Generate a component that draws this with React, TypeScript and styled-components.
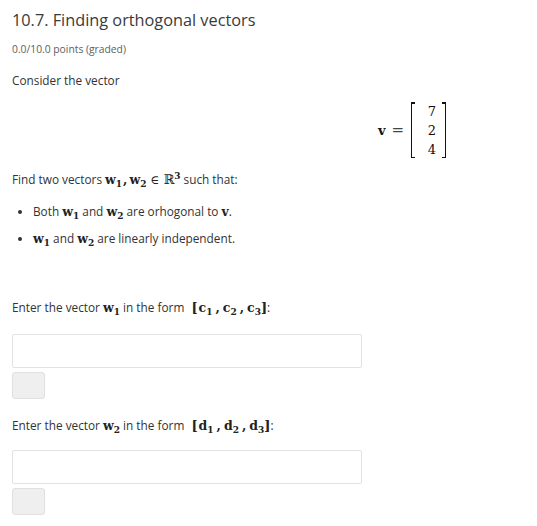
import React from "react";
import styled, { createGlobalStyle } from "styled-components";

const Global = createGlobalStyle`
  html, body { margin: 0; padding: 0; background: #fff; }
  body { font-family: "Open Sans", "Noto Sans", sans-serif; color: #333; }
`;

const Page = styled.div`
  padding: 8px 12px 0 12px;
  width: 350px;
`;

const Title = styled.h2`
  margin: 0;
  font-size: 16.3px;
  font-weight: 400;
  line-height: 24px;
  color: #3a3a3a;
  white-space: nowrap;
`;

const Points = styled.div`
  margin-top: 10px;
  font-size: 10.3px;
  line-height: 14px;
  color: #5e5e5e;
`;

const Para = styled.p<{ $mt?: number }>`
  margin: ${(p) => p.$mt ?? 0}px 0 0 0;
  font-size: 11.8px;
  line-height: 16px;
  color: #333;
  white-space: nowrap;
`;

const Display = styled.div`
  display: flex;
  align-items: center;
  margin-top: 14px;
  margin-left: 366px;
  height: 56px;
`;

const serif = `"DejaVu Serif", "Liberation Serif", serif`;

const Bold = styled.span`
  font-family: ${serif};
  font-weight: 700;
  font-size: 12.5px;
  color: #222;
`;

const Sub = styled.sub`
  font-family: ${serif};
  font-weight: 700;
  font-size: 9px;
  vertical-align: -2.5px;
  line-height: 0;
  color: #222;
`;

const Sup = styled.sup`
  font-family: ${serif};
  font-weight: 700;
  font-size: 9px;
  vertical-align: 5px;
  line-height: 0;
  color: #222;
`;

const Comma = styled.span<{ $wide?: boolean }>`
  font-family: ${serif};
  font-weight: 700;
  font-size: 12.5px;
  color: #222;
  margin: ${(p) => (p.$wide ? "0 3px 0 3px" : "0 2px 0 1px")};
`;

const MathOp = styled.span`
  font-family: ${serif};
  font-size: 12px;
  margin: 0 4px;
  color: #222;
`;

const Reals = styled.span`
  font-family: ${serif};
  font-size: 13px;
  color: #222;
`;

const VarV = styled.span`
  font-family: ${serif};
  font-weight: 700;
  font-size: 13px;
  color: #111;
`;

const Eq = styled.span`
  font-family: ${serif};
  font-size: 15px;
  margin: 0 7px 0 6px;
  color: #444;
`;

const BracketWrap = styled.div`
  position: relative;
`;

const Matrix = styled.div`
  display: flex;
  flex-direction: column;
  align-items: flex-end;
  justify-content: space-between;
  box-sizing: border-box;
  height: 56px;
  width: 35px;
  padding: 1px 9px 0 0;
  border-left: 1.5px solid #111;
  border-right: 1.5px solid #111;
`;

const Corner = styled.span<{ $side: "l" | "r"; $pos: "t" | "b" }>`
  position: absolute;
  ${(p) => (p.$side === "l" ? "left: 0;" : "right: 0;")}
  ${(p) => (p.$pos === "t" ? "top: 0;" : "bottom: 0;")}
  width: 4px;
  height: 1.5px;
  background: #111;
`;

const Cell = styled.span`
  font-family: ${serif};
  font-size: 13px;
  line-height: 17px;
  color: #111;
`;

const Bullets = styled.ul`
  margin: 15px 0 0 0;
  padding: 0 0 0 21px;
  font-size: 11.8px;
  line-height: 16px;
  color: #333;
`;

const Item = styled.li`
  margin-bottom: 10px;
  white-space: nowrap;
`;

const Bracket = styled.span<{ $open?: boolean }>`
  font-family: ${serif};
  font-weight: 700;
  font-size: 13px;
  color: #222;
  margin-left: ${(p) => (p.$open ? "4px" : "0")};
  margin-right: ${(p) => (p.$open ? "1px" : "0")};
`;

const Input = styled.div<{ $mt: number }>`
  margin-top: ${(p) => p.$mt}px;
  width: 350px;
  height: 34px;
  box-sizing: border-box;
  border: 1px solid #e2e2e2;
  border-radius: 2px;
  background: #fff;
`;

const Button = styled.div`
  margin-top: 4px;
  width: 33px;
  height: 27px;
  box-sizing: border-box;
  border: 1px solid #e0e0e0;
  border-radius: 3px;
  background: #efefef;
`;

const W = ({ n }: { n: string }) => (
  <>
    <Bold>w</Bold>
    <Sub>{n}</Sub>
  </>
);

const Form = ({ l }: { l: string }) => (
  <>
    <Bracket $open>[</Bracket>
    <Bold>{l}</Bold>
    <Sub>1</Sub>
    <Comma $wide>,</Comma>
    <Bold>{l}</Bold>
    <Sub>2</Sub>
    <Comma $wide>,</Comma>
    <Bold>{l}</Bold>
    <Sub>3</Sub>
    <Bracket>]</Bracket>
  </>
);

export default function App() {
  return (
    <>
      <Global />
      <Page>
        <Title>10.7. Finding orthogonal vectors</Title>
        <Points>0.0/10.0 points (graded)</Points>
        <Para $mt={16}>Consider the vector</Para>
        <Display>
          <VarV>v</VarV>
          <Eq>=</Eq>
          <BracketWrap>
            <Corner $side="l" $pos="t" />
            <Corner $side="l" $pos="b" />
            <Corner $side="r" $pos="t" />
            <Corner $side="r" $pos="b" />
            <Matrix>
              <Cell>7</Cell>
              <Cell>2</Cell>
              <Cell>4</Cell>
            </Matrix>
          </BracketWrap>
        </Display>
        <Para $mt={13}>
          Find two vectors <W n="1" />
          <Comma>,</Comma>
          <W n="2" />
          <MathOp>∈</MathOp>
          <Reals>ℝ</Reals>
          <Sup>3</Sup> such that:
        </Para>
        <Bullets>
          <Item>
            Both <W n="1" /> and <W n="2" /> are orhogonal to <Bold>v</Bold>.
          </Item>
          <Item>
            <W n="1" /> and <W n="2" /> are linearly independent.
          </Item>
        </Bullets>
        <Para $mt={52}>
          Enter the vector <W n="1" /> in the form <Form l="c" />:
        </Para>
        <Input $mt={18} />
        <Button />
        <Para $mt={18}>
          Enter the vector <W n="2" /> in the form <Form l="d" />:
        </Para>
        <Input $mt={16} />
        <Button />
      </Page>
    </>
  );
}
